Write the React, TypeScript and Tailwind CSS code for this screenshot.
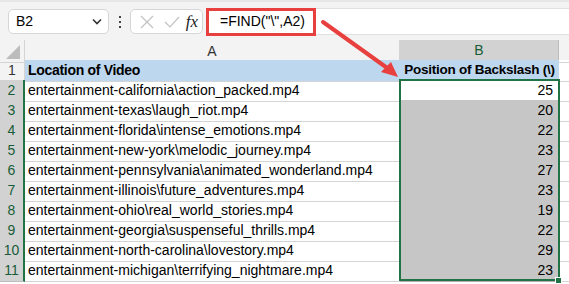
import React from "react";

const rows: [string, number][] = [
  ["entertainment-california\\action_packed.mp4", 25],
  ["entertainment-texas\\laugh_riot.mp4", 20],
  ["entertainment-florida\\intense_emotions.mp4", 22],
  ["entertainment-new-york\\melodic_journey.mp4", 23],
  ["entertainment-pennsylvania\\animated_wonderland.mp4", 27],
  ["entertainment-illinois\\future_adventures.mp4", 23],
  ["entertainment-ohio\\real_world_stories.mp4", 19],
  ["entertainment-georgia\\suspenseful_thrills.mp4", 22],
  ["entertainment-north-carolina\\lovestory.mp4", 29],
  ["entertainment-michigan\\terrifying_nightmare.mp4", 23],
];

const font = { fontFamily: '"Liberation Sans", Arial, sans-serif' };

export default function App() {
  return (
    <div className="relative w-[569px] h-[284px] overflow-hidden bg-white text-black" style={font}>
      {/* Formula bar */}
      <div className="h-[40px] bg-[#f3f3f3] flex items-start pt-[7px] pl-[8px] border-t-[2px] border-[#e6e6e6]">
        <div className="w-[101px] h-[25px] bg-white border border-[#d6d6d6] rounded-[5px] flex items-center justify-between pl-[7px] pr-[6px] text-[14px]">
          <span>B2</span>
          <svg width="10" height="7" viewBox="0 0 10 7">
            <path d="M1 1.5 L5 5.5 L9 1.5" fill="none" stroke="#333" strokeWidth="1.6" />
          </svg>
        </div>
        <div className="w-[21px] h-[25px] flex flex-col items-center justify-center gap-[3px]">
          <span className="w-[2px] h-[2px] bg-[#444]" />
          <span className="w-[2px] h-[2px] bg-[#444]" />
          <span className="w-[2px] h-[2px] bg-[#444]" />
        </div>
        <div className="w-[73px] h-[25px] bg-white border border-[#d6d6d6] rounded-[5px] flex items-center pl-[9px] pr-[4px]">
          <svg width="14" height="14" viewBox="0 0 14 14">
            <path d="M1 1 L13 13 M13 1 L1 13" stroke="#c2c2c2" strokeWidth="1.2" />
          </svg>
          <svg width="16" height="14" viewBox="0 0 16 14" className="ml-[10px]">
            <path d="M1 7 L6 12 L15 2" fill="none" stroke="#c2c2c2" strokeWidth="1.2" />
          </svg>
          <span className="ml-auto text-[17px] italic leading-none text-[#222]" style={{ fontFamily: '"Liberation Serif", serif' }}>fx</span>
        </div>
        <div className="ml-[3px] flex-1 h-[27px] -mt-[1px] bg-white flex items-center border-y border-[#e0e0e0]">
          <div className="w-[110px] h-[28px] border-[3px] border-[#e8403f] flex items-center pl-[11px] text-[14px]">
            =FIND("\",A2)
          </div>
        </div>
      </div>

      {/* Column headers */}
      <div className="grid grid-cols-[25px_375px_159px_1fr] h-[20px] bg-[#f3f3f3] text-[14px] text-[#333]">
        <div className="border-r border-b border-[#d4d4d4] relative">
          <svg width="14" height="14" viewBox="0 0 14 14" className="absolute right-[4px] bottom-[3px]">
            <path d="M14 0 L14 14 L0 14 Z" fill="#bcbcbc" />
          </svg>
        </div>
        <div className="border-r border-b border-[#d4d4d4] flex items-center justify-center">A</div>
        <div className="bg-[#d2d2d2] border-r border-[#bdbdbd] border-b-[2px] border-b-[#217346] flex items-center justify-center text-[#185c37]">B</div>
        <div className="border-b border-[#d4d4d4]" />
      </div>

      {/* Row 1 */}
      <div className="grid grid-cols-[25px_375px_159px_1fr] h-[20px] text-[14px]">
        <div className="bg-[#f3f3f3] border-r border-b border-[#d4d4d4] flex items-center justify-center text-[#333]">1</div>
        <div className="bg-[#bdd7ee] border-b border-[#d4d4d4] flex items-center pl-[3px] font-bold tracking-[-0.3px]">Location of Video</div>
        <div className="bg-[#bdd7ee] border-b border-[#d4d4d4] flex items-center justify-center font-bold whitespace-nowrap text-[13.5px] tracking-[-0.25px]">Position of Backslash (\)</div>
        <div className="border-b border-[#d4d4d4]" />
      </div>

      {/* Data rows */}
      {rows.map(([loc, pos], i) => (
        <div key={i} className="grid grid-cols-[25px_375px_159px_1fr] h-[20px] text-[14px]">
          <div className="bg-[#d2d2d2] border-r-[2px] border-r-[#217346] border-b border-[#bdbdbd] flex items-center justify-center text-[#185c37]">{i + 2}</div>
          <div className="border-r border-b border-[#d4d4d4] flex items-center pl-[3px] whitespace-nowrap">{loc}</div>
          <div className={`${i === 0 ? "bg-white border-[#d4d4d4]" : "bg-[#c6c6c6] border-[#b0b0b0]"} border-b flex items-center justify-end pr-[6px]`}>{pos}</div>
          <div className="border-b border-[#d4d4d4]" />
        </div>
      ))}

      {/* Selection outline B2:B11 */}
      <div className="absolute left-[399px] top-[79px] w-[161px] h-[202px] border-[2px] border-[#217346] pointer-events-none" />
      <div className="absolute left-[555px] top-[277px] w-[7px] h-[7px] bg-[#217346] border border-white" />

      {/* Arrow */}
      <svg className="absolute left-0 top-0 pointer-events-none" width="569" height="284">
        <line x1="323" y1="22" x2="390" y2="70" stroke="#e8403f" strokeWidth="4" strokeLinecap="round" />
        <path d="M398 77 L381 72 L391 62 Z" fill="#e8403f" />
      </svg>
    </div>
  );
}
